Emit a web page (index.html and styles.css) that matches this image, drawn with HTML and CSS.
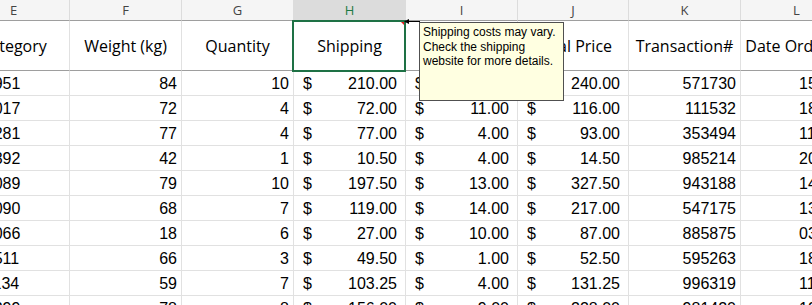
FILE: index.html
```html
<!DOCTYPE html>
<html>
<head>
<meta charset="utf-8">
<link rel="stylesheet" href="styles.css">
</head>
<body>
<div class="sheet">
  <div class="ch">E</div><div class="ch">F</div><div class="ch">G</div><div class="ch ch-sel">H</div><div class="ch">I</div><div class="ch">J</div><div class="ch">K</div><div class="ch">L</div>

  <div class="hd">Category</div><div class="hd">Weight (kg)</div><div class="hd">Quantity</div><div class="hd sel">Shipping</div><div class="hd">Unit Cost</div><div class="hd">Total Price</div><div class="hd">Transaction#</div><div class="hd hd-l">Date Ordered</div>

  <div class="c tx">CT-1951</div><div class="c num">84</div><div class="c num">10</div><div class="c acc"><span>$</span><span>210.00</span></div><div class="c acc"><span>$</span><span>3.00</span></div><div class="c acc"><span>$</span><span>240.00</span></div><div class="c num">571730</div><div class="c dt">15/03/2024</div>

  <div class="c tx">CT-1017</div><div class="c num">72</div><div class="c num">4</div><div class="c acc"><span>$</span><span>72.00</span></div><div class="c acc"><span>$</span><span>11.00</span></div><div class="c acc"><span>$</span><span>116.00</span></div><div class="c num">111532</div><div class="c dt">18/02/2024</div>

  <div class="c tx">CT-1281</div><div class="c num">77</div><div class="c num">4</div><div class="c acc"><span>$</span><span>77.00</span></div><div class="c acc"><span>$</span><span>4.00</span></div><div class="c acc"><span>$</span><span>93.00</span></div><div class="c num">353494</div><div class="c dt">11/01/2024</div>

  <div class="c tx">CT-1392</div><div class="c num">42</div><div class="c num">1</div><div class="c acc"><span>$</span><span>10.50</span></div><div class="c acc"><span>$</span><span>4.00</span></div><div class="c acc"><span>$</span><span>14.50</span></div><div class="c num">985214</div><div class="c dt">20/04/2024</div>

  <div class="c tx">CT-1089</div><div class="c num">79</div><div class="c num">10</div><div class="c acc"><span>$</span><span>197.50</span></div><div class="c acc"><span>$</span><span>13.00</span></div><div class="c acc"><span>$</span><span>327.50</span></div><div class="c num">943188</div><div class="c dt">14/03/2024</div>

  <div class="c tx">CT-1090</div><div class="c num">68</div><div class="c num">7</div><div class="c acc"><span>$</span><span>119.00</span></div><div class="c acc"><span>$</span><span>14.00</span></div><div class="c acc"><span>$</span><span>217.00</span></div><div class="c num">547175</div><div class="c dt">13/02/2024</div>

  <div class="c tx">CT-1066</div><div class="c num">18</div><div class="c num">6</div><div class="c acc"><span>$</span><span>27.00</span></div><div class="c acc"><span>$</span><span>10.00</span></div><div class="c acc"><span>$</span><span>87.00</span></div><div class="c num">885875</div><div class="c dt">03/01/2024</div>

  <div class="c tx">CT-1511</div><div class="c num">66</div><div class="c num">3</div><div class="c acc"><span>$</span><span>49.50</span></div><div class="c acc"><span>$</span><span>1.00</span></div><div class="c acc"><span>$</span><span>52.50</span></div><div class="c num">595263</div><div class="c dt">18/04/2024</div>

  <div class="c tx">CT-1134</div><div class="c num">59</div><div class="c num">7</div><div class="c acc"><span>$</span><span>103.25</span></div><div class="c acc"><span>$</span><span>4.00</span></div><div class="c acc"><span>$</span><span>131.25</span></div><div class="c num">996319</div><div class="c dt">11/02/2024</div>

  <div class="c tx">CT-1299</div><div class="c num">78</div><div class="c num">8</div><div class="c acc"><span>$</span><span>156.00</span></div><div class="c acc"><span>$</span><span>9.00</span></div><div class="c acc"><span>$</span><span>228.00</span></div><div class="c num">981420</div><div class="c dt">12/03/2024</div>
</div>

<svg class="arrow" width="20" height="8" viewBox="0 0 20 8">
  <line x1="3" y1="2.5" x2="16" y2="2.5" stroke="#000" stroke-width="1"/>
  <polygon points="0,2.5 5,0 5,5" fill="#000"/>
</svg>

<div class="comment">Shipping costs may vary.<br>Check the shipping<br>website for more details.</div>
</body>
</html>
```

FILE: styles.css
```css
html, body {
  margin: 0;
  padding: 0;
  background: #ffffff;
  overflow: hidden;
  width: 812px;
  height: 305px;
}

.sheet {
  display: grid;
  grid-template-columns: 112px 112px 112px 112px 112px 111px 112px 112px;
  grid-template-rows: 21px 50px repeat(10, 25px);
  margin-left: -42px;
  width: max-content;
  font-family: "Liberation Sans", Arial, sans-serif;
  font-size: 16px;
  color: #000;
}

.sheet > div {
  box-sizing: border-box;
  border-right: 1px solid #e1e1e1;
  border-bottom: 1px solid #e1e1e1;
  white-space: nowrap;
  overflow: hidden;
}

.ch {
  background: #f5f5f5;
  border-right-color: #dcdcdc !important;
  border-bottom-color: #9e9e9e !important;
  font-family: "Open Sans", "Noto Sans", sans-serif;
  font-size: 13px;
  color: #444;
  display: flex;
  align-items: center;
  justify-content: center;
}

.ch-sel {
  background: #dcdcdc;
  color: #1b7a43;
}

.hd {
  font-family: "Open Sans", "Noto Sans", sans-serif;
  font-size: 16px;
  display: flex;
  align-items: center;
  justify-content: center;
  border-bottom-color: #9e9e9e !important;
}

.sel {
  position: relative;
  overflow: visible !important;
}

.sel::before {
  content: "";
  position: absolute;
  top: 0;
  right: 0;
  border-top: 5px solid #e8191a;
  border-left: 5px solid transparent;
}

.sel::after {
  content: "";
  position: absolute;
  top: -1px;
  left: -2px;
  right: -1px;
  bottom: -2px;
  border: 2px solid #1e7145;
}

.c {
  display: flex;
  align-items: center;
  padding-top: 1px;
}

.tx {
  padding-left: 1px;
}

.num {
  justify-content: flex-end;
  padding-right: 4px;
}

.acc {
  justify-content: space-between;
  padding-left: 9px;
  padding-right: 8px;
}

.dt {
  padding-left: 58px;
}

.arrow {
  position: absolute;
  left: 404px;
  top: 19px;
}

.comment {
  position: absolute;
  left: 419px;
  top: 22px;
  width: 145px;
  height: 79px;
  box-sizing: border-box;
  background: #ffffe1;
  border: 1px solid #505050;
  padding: 2px 0 0 3px;
  font-family: "Liberation Sans", Arial, sans-serif;
  font-size: 12px;
  line-height: 14.5px;
  color: #000;
}
```
